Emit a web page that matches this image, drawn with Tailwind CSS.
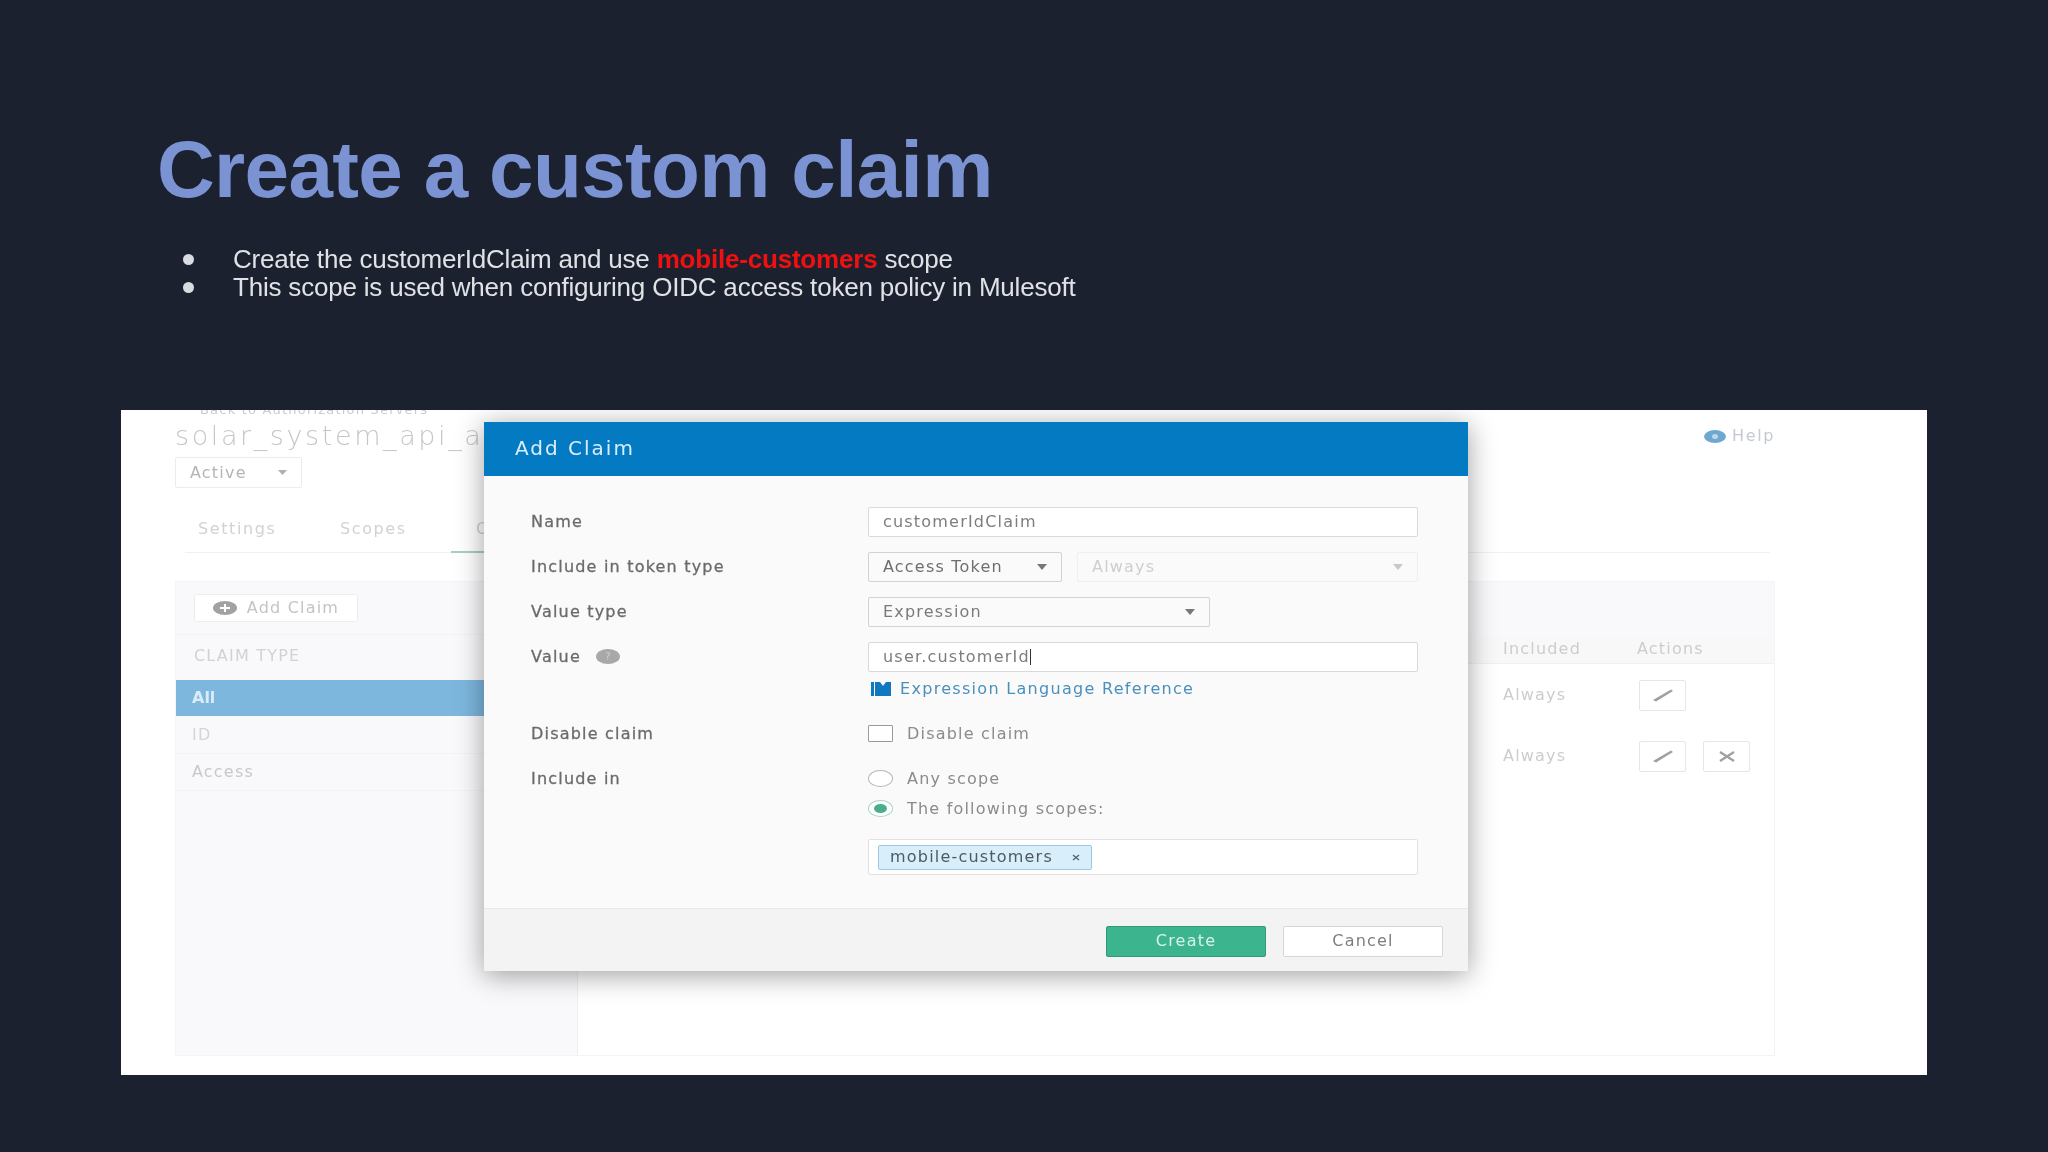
<!DOCTYPE html>
<html lang="en">
<head>
  <meta charset="UTF-8" />
  <title>Create a custom claim</title>
  <script src="https://cdn.jsdelivr.net/npm/@tailwindcss/browser@4"></script>
</head>
<body class="bg-[#1c2130] h-[1152px] overflow-hidden font-['Liberation_Sans',sans-serif]">

  <!-- Slide heading -->
  <header class="pl-[157px] pt-[130px]">
    <h1 class="text-[80px] leading-[80px] tracking-[-0.65px] font-bold text-[#7b93d3] blur-[0.5px]">Create a custom claim</h1>
    <ul class="mt-[35px] pl-[26px] text-[26px] leading-[28px] tracking-[-0.2px] text-[#e0e2e6] blur-[0.4px]">
      <li class="flex items-center gap-[39px]">
        <span class="w-[11px] h-[11px] rounded-full bg-[#d8dbe0]"></span>
        <span>Create the customerIdClaim and use <b class="text-[#f01010]">mobile-customers</b> scope</span>
      </li>
      <li class="flex items-center gap-[39px]">
        <span class="w-[11px] h-[11px] rounded-full bg-[#d8dbe0]"></span>
        <span>This scope is used when configuring OIDC access token policy in Mulesoft</span>
      </li>
    </ul>
  </header>

  <!-- Embedded screenshot -->
  <section class="relative ml-[121px] mt-[109px] w-[1806px] h-[665px] bg-white overflow-hidden font-['DejaVu_Sans',sans-serif] blur-[0.7px]">

    <!-- Page behind the dialog -->
    <div class="pl-[54px] pr-[152px] text-[#c4c6ca] text-[16px] tracking-[1.2px]">
      <p class="h-[5px] pl-[25px] text-[13px] leading-[0px] text-[#c9cbd0]">Back to Authorization Servers</p>
      <div class="flex justify-between items-center h-[34px] pt-[8px]">
        <span class="text-[27px] leading-[34px] tracking-[2.6px] font-light text-[#c4c6c9]">solar_system_api_a</span>
        <span class="flex items-center gap-[6px] text-[#c5cad0] tracking-[1.6px]">
          <svg width="22" height="13" viewBox="0 0 22 13"><ellipse cx="11" cy="6.5" rx="11" ry="6.5" fill="#6fa8cf"/><ellipse cx="11" cy="6.5" rx="3" ry="2.5" fill="#bcd8ea"/></svg>
          Help
        </span>
      </div>
      <div class="mt-[8px] w-[127px] h-[31px] border border-[#ececec] rounded-[2px] flex items-center justify-between px-[14px] text-[#b5b5b5]">
        <span>Active</span>
        <svg width="9" height="5" viewBox="0 0 9 5"><path d="M0 0h9L4.5 5z" fill="#b0b0b0"/></svg>
      </div>

      <!-- Tabs -->
      <div class="mt-[24px] h-[41px] ml-[10px] mr-[5px] pt-[5px] border-b border-[#f1f1f1] flex text-[#d2d2d2] tracking-[1.6px]">
        <span class="ml-[13px] w-[142px]">Settings</span>
        <span class="w-[136px]">Scopes</span>
        <span class="border-b-2 border-[#a9cfc0] h-[36px] w-[40px] pl-[25px] -ml-[25px]">C</span>
      </div>

      <!-- Claims panel -->
      <div class="mt-[28px] h-[475px] border border-[#f4f4f6] bg-[#f9f9fb] flex">
        <div class="w-[402px] border-r border-[#f0f0f2] shrink-0">
          <div class="h-[53px] pl-[18px] pt-[12px] border-b border-[#f3f3f5]">
            <div class="w-[164px] h-[28px] bg-white border border-[#ededed] rounded-[2px] flex items-center justify-center gap-[10px] text-[#c4c4c4]">
              <svg width="24" height="14" viewBox="0 0 24 14"><ellipse cx="12" cy="7" rx="12" ry="7" fill="#a2a2a2"/><path d="M7 7h10M12 3v8" stroke="#ffffff" stroke-width="2"/></svg>
              Add Claim
            </div>
          </div>
          <div class="h-[41px] pl-[18px] flex items-center text-[#d2d2d2]">CLAIM TYPE</div>
          <div class="mt-[4px] h-[36px] pl-[16px] bg-[#7db7de] flex items-center font-bold text-[#dcecf7] tracking-normal">All</div>
          <div class="h-[38px] pl-[16px] border-b border-[#f3f3f5] flex items-center text-[#d5d5d5]">ID</div>
          <div class="h-[37px] pl-[16px] border-b border-[#f3f3f5] flex items-center text-[#c8c8c8]">Access</div>
        </div>
        <div class="flex-1 mt-[53px] bg-white flex flex-col text-[#cdcdcd]">
          <div class="h-[29px] bg-[#f8f8f9] border-b border-[#f1f1f3] flex items-center justify-end">
            <span class="w-[134px]">Included</span>
            <span class="w-[137px]">Actions</span>
          </div>
          <div class="h-[62px] flex items-center justify-end">
            <span class="w-[136px]">Always</span>
            <div class="w-[135px] pr-[1px]">
              <button class="w-[47px] h-[31px] border border-[#e6e6e6] rounded-[2px] flex items-center justify-center">
                <svg width="24" height="14" viewBox="0 0 24 14"><path d="M2 12L20 1.5l2 1.5L5 13.5z" fill="#a0a0a0"/></svg>
              </button>
            </div>
          </div>
          <div class="h-[60px] flex items-center justify-end">
            <span class="w-[136px]">Always</span>
            <div class="w-[135px] flex gap-[17px]">
              <button class="w-[47px] h-[31px] border border-[#e6e6e6] rounded-[2px] flex items-center justify-center">
                <svg width="24" height="14" viewBox="0 0 24 14"><path d="M2 12L20 1.5l2 1.5L5 13.5z" fill="#a0a0a0"/></svg>
              </button>
              <button class="w-[47px] h-[31px] border border-[#e6e6e6] rounded-[2px] flex items-center justify-center">
                <svg width="16" height="11" viewBox="0 0 16 11"><path d="M1 1l14 9M15 1L1 10" stroke="#a0a0a0" stroke-width="2.2"/></svg>
              </button>
            </div>
          </div>
        </div>
      </div>
    </div>

    <!-- Add Claim dialog -->
    <div class="absolute left-[363px] top-[12px] w-[984px] h-[549px] bg-[#fafafb] shadow-[0_4px_26px_rgba(0,0,0,0.38)] flex flex-col text-[16px] tracking-[1.2px] text-[#6b6b6b]">
      <div class="h-[54px] bg-[#047ac2] pl-[31px] pb-[2px] flex items-center text-[20px] tracking-[2px] text-[#d8eefb]">Add Claim</div>

      <div class="flex-1 pl-[47px] pr-[50px] pt-[31px]">
        <div class="flex h-[45px]">
          <label class="w-[337px] h-[29px] flex items-center [-webkit-text-stroke:0.3px_#6b6b6b]">Name</label>
          <div class="flex-1 h-[30px] bg-white border border-[#d9d9d9] rounded-[2px] flex items-center pl-[14px] text-[#7d7d7d]">customerIdClaim</div>
        </div>
        <div class="flex h-[45px]">
          <label class="w-[337px] h-[29px] flex items-center [-webkit-text-stroke:0.3px_#6b6b6b]">Include in token type</label>
          <div class="w-[194px] h-[30px] border border-[#d2d2d2] rounded-[2px] flex items-center justify-between px-[14px] text-[#6e6e6e]">
            <span>Access Token</span>
            <svg width="10" height="6" viewBox="0 0 10 6"><path d="M0 0h10L5 6z" fill="#777777"/></svg>
          </div>
          <div class="ml-[15px] flex-1 h-[30px] border border-[#efefef] rounded-[2px] flex items-center justify-between px-[14px] text-[#cfcfcf]">
            <span>Always</span>
            <svg width="10" height="6" viewBox="0 0 10 6"><path d="M0 0h10L5 6z" fill="#c8c8c8"/></svg>
          </div>
        </div>
        <div class="flex h-[45px]">
          <label class="w-[337px] h-[29px] flex items-center [-webkit-text-stroke:0.3px_#6b6b6b]">Value type</label>
          <div class="w-[342px] h-[30px] border border-[#d2d2d2] rounded-[2px] flex items-center justify-between px-[14px] text-[#7a7a7a]">
            <span>Expression</span>
            <svg width="10" height="6" viewBox="0 0 10 6"><path d="M0 0h10L5 6z" fill="#777777"/></svg>
          </div>
        </div>
        <div class="flex h-[34px]">
          <label class="w-[337px] h-[29px] flex items-center gap-[15px] [-webkit-text-stroke:0.3px_#6b6b6b]">Value
            <span class="w-[24px] h-[15px] rounded-[50%] bg-[#a8a8a8] flex items-center justify-center text-[10px] tracking-normal [-webkit-text-stroke:0] text-[#cfcfcf]">?</span>
          </label>
          <div class="flex-1 h-[30px] bg-white border border-[#d9d9d9] rounded-[2px] flex items-center pl-[14px] text-[#7d7d7d]">user.customerId<span class="w-px h-[16px] bg-[#333333]"></span></div>
        </div>
        <div class="flex h-[43px] pl-[337px]">
          <a class="ml-[3px] flex items-center gap-[8px] h-[25px] tracking-[1.3px] text-[#4a90bb]">
            <svg width="21" height="14" viewBox="0 0 21 14"><path d="M0 0h3v14H0zM4 0h5l3 4 3-4h5v14H4z" fill="#1078be"/></svg>
            Expression Language Reference
          </a>
        </div>
        <div class="flex h-[45px]">
          <label class="w-[337px] h-[29px] flex items-center [-webkit-text-stroke:0.3px_#6b6b6b]">Disable claim</label>
          <div class="flex items-center h-[29px] gap-[14px] text-[#8b8b8b]">
            <span class="w-[25px] h-[17px] bg-white border border-[#9a9a9a] rounded-[1px]"></span>
            Disable claim
          </div>
        </div>
        <div class="flex">
          <label class="w-[337px] h-[29px] flex items-center [-webkit-text-stroke:0.3px_#6b6b6b]">Include in</label>
          <div class="flex-1 text-[#8b8b8b]">
            <div class="flex items-center h-[29px] gap-[14px]">
              <span class="w-[25px] h-[17px] bg-white border-[1.5px] border-[#b5b5b5] rounded-[50%]"></span>
              Any scope
            </div>
            <div class="flex items-center h-[31px] gap-[14px]">
              <span class="w-[25px] h-[17px] bg-white border-[1.5px] border-[#a9d5c5] rounded-[50%] flex items-center justify-center">
                <span class="w-[13px] h-[9px] rounded-[50%] bg-[#4aae8c]"></span>
              </span>
              The following scopes:
            </div>
            <div class="mt-[15px] h-[36px] bg-white border border-[#e2e2e2] rounded-[2px] flex items-center pl-[9px]">
              <span class="w-[214px] h-[25px] bg-[#d8eefa] border border-[#9cc8e2] rounded-[2px] flex items-center justify-between pl-[11px] pr-[11px] text-[#4d5a60]">
                mobile-customers
                <svg width="8" height="7" viewBox="0 0 8 7"><path d="M1 1l6 5M7 1L1 6" stroke="#55666e" stroke-width="1.4"/></svg>
              </span>
            </div>
          </div>
        </div>
      </div>

      <div class="h-[63px] pt-[2px] bg-[#f3f3f4] border-t border-[#e9e9ea] flex items-center justify-end gap-[17px] pr-[25px]">
        <button class="w-[160px] h-[31px] bg-[#3cb48e] border border-[#2f9a78] rounded-[2px] text-[#d5f3e8]">Create</button>
        <button class="w-[160px] h-[31px] bg-white border border-[#d6d6d6] rounded-[2px] text-[#7e7e7e]">Cancel</button>
      </div>
    </div>
  </section>

</body>
</html>
